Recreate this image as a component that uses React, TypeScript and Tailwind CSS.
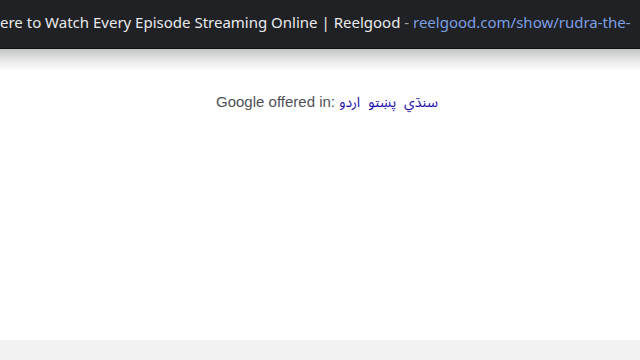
import React from 'react';

const languages = ['اردو', 'پښتو', 'سنڌي'];

const App = () => {
  return (
    <div className="w-[640px] h-[360px] flex flex-col bg-white overflow-hidden">
      {/* title bar */}
      <div className="h-[49px] shrink-0 bg-[#202124] border-b border-[#111214] flex items-center overflow-hidden">
        <div className="whitespace-nowrap text-[15px] font-['Noto_Sans',sans-serif] -mt-[4px]">
          <span className="text-[#e8eaed]">ere to Watch Every Episode Streaming Online | Reelgood</span>
          <span className="text-[#9aa0a6]"> - </span>
          <span className="text-[#7d9fe3]">reelgood.com/show/rudra-the-</span>
        </div>
      </div>
      <div className="h-[22px] shrink-0 bg-gradient-to-b from-[#c4c5c6] via-[#e6e6e6] to-white" />

      {/* language line */}
      <div className="flex-1 flex justify-center pt-[20px]">
        <div className="pl-[22px] text-[15px] font-['Liberation_Sans',Arial,sans-serif] text-[#4d5156]">
          Google offered in:&nbsp;
          {languages.map((lang) => (
            <a key={lang} dir="rtl" className="text-[#1a0dab] mr-[8px] font-['Noto_Sans_Arabic','DejaVu_Sans',sans-serif] text-[14px]">
              {lang}
            </a>
          ))}
        </div>
      </div>

      <div className="h-[20px] shrink-0 bg-[#f2f2f2]" />
    </div>
  );
};

export default App;
